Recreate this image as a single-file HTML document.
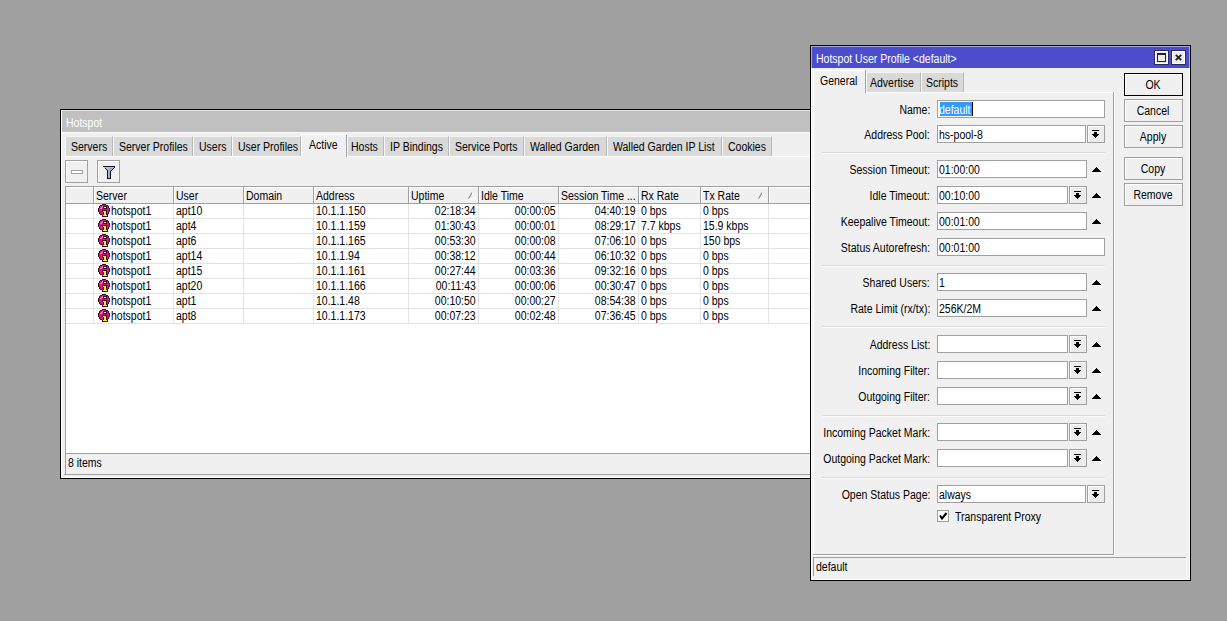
<!DOCTYPE html><html><head><meta charset="utf-8"><style>
html,body{margin:0;padding:0;width:1227px;height:621px;overflow:hidden;background:#a0a0a0}
div{position:absolute}
.t{font-family:"Liberation Sans",sans-serif;font-size:12px;line-height:13px;white-space:nowrap;color:#000}
</style></head><body>
<div style="left:60px;top:109px;width:800px;height:370px;background:#000"></div>
<div style="left:61px;top:110px;width:798px;height:368px;background:#fff"></div>
<div style="left:62px;top:111px;width:796px;height:366px;background:#f0f0f0"></div>
<div style="left:62px;top:111px;width:796px;height:21px;background:#c0c0c0"></div>
<div style="left:61px;top:110px;width:798px;height:1px;background:#e2e2e2"></div>
<div style="left:62px;top:132px;width:797px;height:1px;background:#fafafa"></div>
<div class="t" style="left:66px;top:117px;color:#fff;transform:scaleX(0.875);transform-origin:0 0;">Hotspot</div>
<div style="left:65px;top:156px;width:794px;height:1px;background:#fff"></div>
<div style="left:65px;top:136px;width:48px;height:20px;background:#d9d9d9"></div>
<div style="left:65px;top:136px;width:47px;height:1px;background:#f4f4f4"></div>
<div style="left:65px;top:136px;width:1px;height:20px;background:#f8f8f8"></div>
<div style="left:112px;top:137px;width:1px;height:19px;background:#b8b8b8"></div>
<div class="t" style="left:71px;top:141px;color:#000;transform:scaleX(0.875);transform-origin:0 0;">Servers</div>
<div style="left:113px;top:136px;width:80px;height:20px;background:#d9d9d9"></div>
<div style="left:113px;top:136px;width:79px;height:1px;background:#f4f4f4"></div>
<div style="left:113px;top:136px;width:1px;height:20px;background:#f8f8f8"></div>
<div style="left:192px;top:137px;width:1px;height:19px;background:#b8b8b8"></div>
<div class="t" style="left:119px;top:141px;color:#000;transform:scaleX(0.875);transform-origin:0 0;">Server Profiles</div>
<div style="left:193px;top:136px;width:39px;height:20px;background:#d9d9d9"></div>
<div style="left:193px;top:136px;width:38px;height:1px;background:#f4f4f4"></div>
<div style="left:193px;top:136px;width:1px;height:20px;background:#f8f8f8"></div>
<div style="left:231px;top:137px;width:1px;height:19px;background:#b8b8b8"></div>
<div class="t" style="left:199px;top:141px;color:#000;transform:scaleX(0.875);transform-origin:0 0;">Users</div>
<div style="left:232px;top:136px;width:69px;height:20px;background:#d9d9d9"></div>
<div style="left:232px;top:136px;width:68px;height:1px;background:#f4f4f4"></div>
<div style="left:232px;top:136px;width:1px;height:20px;background:#f8f8f8"></div>
<div style="left:300px;top:137px;width:1px;height:19px;background:#b8b8b8"></div>
<div class="t" style="left:238px;top:141px;color:#000;transform:scaleX(0.875);transform-origin:0 0;">User Profiles</div>
<div style="left:347px;top:136px;width:37px;height:20px;background:#d9d9d9"></div>
<div style="left:347px;top:136px;width:36px;height:1px;background:#f4f4f4"></div>
<div style="left:347px;top:136px;width:1px;height:20px;background:#f8f8f8"></div>
<div style="left:383px;top:137px;width:1px;height:19px;background:#b8b8b8"></div>
<div class="t" style="left:351px;top:141px;color:#000;transform:scaleX(0.875);transform-origin:0 0;">Hosts</div>
<div style="left:384px;top:136px;width:65px;height:20px;background:#d9d9d9"></div>
<div style="left:384px;top:136px;width:64px;height:1px;background:#f4f4f4"></div>
<div style="left:384px;top:136px;width:1px;height:20px;background:#f8f8f8"></div>
<div style="left:448px;top:137px;width:1px;height:19px;background:#b8b8b8"></div>
<div class="t" style="left:390px;top:141px;color:#000;transform:scaleX(0.875);transform-origin:0 0;">IP Bindings</div>
<div style="left:449px;top:136px;width:75px;height:20px;background:#d9d9d9"></div>
<div style="left:449px;top:136px;width:74px;height:1px;background:#f4f4f4"></div>
<div style="left:449px;top:136px;width:1px;height:20px;background:#f8f8f8"></div>
<div style="left:523px;top:137px;width:1px;height:19px;background:#b8b8b8"></div>
<div class="t" style="left:455px;top:141px;color:#000;transform:scaleX(0.875);transform-origin:0 0;">Service Ports</div>
<div style="left:524px;top:136px;width:83px;height:20px;background:#d9d9d9"></div>
<div style="left:524px;top:136px;width:82px;height:1px;background:#f4f4f4"></div>
<div style="left:524px;top:136px;width:1px;height:20px;background:#f8f8f8"></div>
<div style="left:606px;top:137px;width:1px;height:19px;background:#b8b8b8"></div>
<div class="t" style="left:530px;top:141px;color:#000;transform:scaleX(0.875);transform-origin:0 0;">Walled Garden</div>
<div style="left:607px;top:136px;width:115px;height:20px;background:#d9d9d9"></div>
<div style="left:607px;top:136px;width:114px;height:1px;background:#f4f4f4"></div>
<div style="left:607px;top:136px;width:1px;height:20px;background:#f8f8f8"></div>
<div style="left:721px;top:137px;width:1px;height:19px;background:#b8b8b8"></div>
<div class="t" style="left:613px;top:141px;color:#000;transform:scaleX(0.875);transform-origin:0 0;">Walled Garden IP List</div>
<div style="left:722px;top:136px;width:50px;height:20px;background:#d9d9d9"></div>
<div style="left:722px;top:136px;width:49px;height:1px;background:#f4f4f4"></div>
<div style="left:722px;top:136px;width:1px;height:20px;background:#f8f8f8"></div>
<div style="left:771px;top:137px;width:1px;height:19px;background:#b8b8b8"></div>
<div class="t" style="left:728px;top:141px;color:#000;transform:scaleX(0.875);transform-origin:0 0;">Cookies</div>
<div style="left:301px;top:134px;width:46px;height:24px;background:#f0f0f0"></div>
<div style="left:301px;top:134px;width:45px;height:1px;background:#fff"></div>
<div style="left:301px;top:134px;width:1px;height:23px;background:#fff"></div>
<div style="left:346px;top:135px;width:1px;height:22px;background:#a0a0a0"></div>
<div class="t" style="left:309px;top:139px;color:#000;transform:scaleX(0.875);transform-origin:0 0;">Active</div>
<div style="left:65px;top:160px;width:23px;height:23px;background:#f0f0f0;border:1px solid #a0a0a0;box-sizing:border-box;box-shadow:inset 1px 1px 0 #fff"></div>
<div style="left:97px;top:160px;width:23px;height:23px;background:#f0f0f0;border:1px solid #a0a0a0;box-sizing:border-box;box-shadow:inset 1px 1px 0 #fff"></div>
<div style="left:71px;top:170px;width:12px;height:4px;background:#fff;border:1px solid #a0a0a0;box-sizing:border-box"></div>
<svg style="position:absolute;left:103px;top:166px" width="12" height="13" viewBox="0 0 12 13" shape-rendering="crispEdges"><defs><linearGradient id="fg" x1="0" x2="1"><stop offset="0" stop-color="#d4d7f0"/><stop offset="1" stop-color="#7f86c4"/></linearGradient></defs><path d="M0 0H12V1L8 5V13H4V5L0 1Z" fill="#111"/><path d="M1 1H11L7 5V12H5V5Z" fill="url(#fg)"/><rect x="1" y="1" width="10" height="1" fill="#b8bce0"/></svg>
<div style="left:65px;top:186px;width:760px;height:268px;background:#fff"></div>
<div style="left:65px;top:186px;width:794px;height:1px;background:#a0a0a0"></div>
<div style="left:65px;top:186px;width:1px;height:268px;background:#a0a0a0"></div>
<div style="left:66px;top:187px;width:792px;height:16px;background:#f0f0f0"></div>
<div style="left:66px;top:187px;width:793px;height:1px;background:#fff"></div>
<div style="left:66px;top:203px;width:793px;height:1px;background:#a0a0a0"></div>
<div style="left:93px;top:187px;width:1px;height:16px;background:#a0a0a0"></div>
<div style="left:94px;top:188px;width:1px;height:15px;background:#fff"></div>
<div style="left:93px;top:204px;width:1px;height:119px;background:#e3e3e3"></div>
<div style="left:173px;top:187px;width:1px;height:16px;background:#a0a0a0"></div>
<div style="left:174px;top:188px;width:1px;height:15px;background:#fff"></div>
<div style="left:173px;top:204px;width:1px;height:119px;background:#e3e3e3"></div>
<div style="left:243px;top:187px;width:1px;height:16px;background:#a0a0a0"></div>
<div style="left:244px;top:188px;width:1px;height:15px;background:#fff"></div>
<div style="left:243px;top:204px;width:1px;height:119px;background:#e3e3e3"></div>
<div style="left:313px;top:187px;width:1px;height:16px;background:#a0a0a0"></div>
<div style="left:314px;top:188px;width:1px;height:15px;background:#fff"></div>
<div style="left:313px;top:204px;width:1px;height:119px;background:#e3e3e3"></div>
<div style="left:408px;top:187px;width:1px;height:16px;background:#a0a0a0"></div>
<div style="left:409px;top:188px;width:1px;height:15px;background:#fff"></div>
<div style="left:408px;top:204px;width:1px;height:119px;background:#e3e3e3"></div>
<div style="left:478px;top:187px;width:1px;height:16px;background:#a0a0a0"></div>
<div style="left:479px;top:188px;width:1px;height:15px;background:#fff"></div>
<div style="left:478px;top:204px;width:1px;height:119px;background:#e3e3e3"></div>
<div style="left:558px;top:187px;width:1px;height:16px;background:#a0a0a0"></div>
<div style="left:559px;top:188px;width:1px;height:15px;background:#fff"></div>
<div style="left:558px;top:204px;width:1px;height:119px;background:#e3e3e3"></div>
<div style="left:638px;top:187px;width:1px;height:16px;background:#a0a0a0"></div>
<div style="left:639px;top:188px;width:1px;height:15px;background:#fff"></div>
<div style="left:638px;top:204px;width:1px;height:119px;background:#e3e3e3"></div>
<div style="left:700px;top:187px;width:1px;height:16px;background:#a0a0a0"></div>
<div style="left:701px;top:188px;width:1px;height:15px;background:#fff"></div>
<div style="left:700px;top:204px;width:1px;height:119px;background:#e3e3e3"></div>
<div style="left:768px;top:187px;width:1px;height:16px;background:#a0a0a0"></div>
<div style="left:769px;top:188px;width:1px;height:15px;background:#fff"></div>
<div style="left:768px;top:204px;width:1px;height:119px;background:#e3e3e3"></div>
<div style="left:66px;top:218px;width:793px;height:1px;background:#e3e3e3"></div>
<div style="left:66px;top:233px;width:793px;height:1px;background:#e3e3e3"></div>
<div style="left:66px;top:248px;width:793px;height:1px;background:#e3e3e3"></div>
<div style="left:66px;top:263px;width:793px;height:1px;background:#e3e3e3"></div>
<div style="left:66px;top:278px;width:793px;height:1px;background:#e3e3e3"></div>
<div style="left:66px;top:293px;width:793px;height:1px;background:#e3e3e3"></div>
<div style="left:66px;top:308px;width:793px;height:1px;background:#e3e3e3"></div>
<div style="left:66px;top:323px;width:793px;height:1px;background:#e3e3e3"></div>
<svg style="position:absolute;left:468px;top:192px" width="9" height="8" viewBox="0 0 9 8"><path d="M0.5 7 L4 0.5" stroke="#8a8a8a" stroke-width="1.2" fill="none"/><path d="M4 0.5 L7.5 7 H0.5" stroke="#fff" stroke-width="1" fill="none"/></svg>
<svg style="position:absolute;left:758px;top:192px" width="9" height="8" viewBox="0 0 9 8"><path d="M0.5 7 L4 0.5" stroke="#8a8a8a" stroke-width="1.2" fill="none"/><path d="M4 0.5 L7.5 7 H0.5" stroke="#fff" stroke-width="1" fill="none"/></svg>
<div class="t" style="left:96px;top:190px;color:#000;transform:scaleX(0.875);transform-origin:0 0;">Server</div>
<div class="t" style="left:176px;top:190px;color:#000;transform:scaleX(0.875);transform-origin:0 0;">User</div>
<div class="t" style="left:246px;top:190px;color:#000;transform:scaleX(0.875);transform-origin:0 0;">Domain</div>
<div class="t" style="left:316px;top:190px;color:#000;transform:scaleX(0.875);transform-origin:0 0;">Address</div>
<div class="t" style="left:411px;top:190px;color:#000;transform:scaleX(0.875);transform-origin:0 0;">Uptime</div>
<div class="t" style="left:481px;top:190px;color:#000;transform:scaleX(0.875);transform-origin:0 0;">Idle Time</div>
<div class="t" style="left:561px;top:190px;color:#000;transform:scaleX(0.875);transform-origin:0 0;">Session Time ...</div>
<div class="t" style="left:641px;top:190px;color:#000;transform:scaleX(0.875);transform-origin:0 0;">Rx Rate</div>
<div class="t" style="left:703px;top:190px;color:#000;transform:scaleX(0.875);transform-origin:0 0;">Tx Rate</div>
<svg width="0" height="0" style="position:absolute"><defs><symbol id="ic" viewBox="0 0 12 13"><rect x="4" y="0" width="4" height="1" fill="#3a0c22"/><rect x="2" y="1" width="2" height="1" fill="#3a0c22"/><rect x="4" y="1" width="4" height="1" fill="#d0157e"/><rect x="8" y="1" width="2" height="1" fill="#3a0c22"/><rect x="1" y="2" width="1" height="1" fill="#3a0c22"/><rect x="2" y="2" width="2" height="1" fill="#d0157e"/><rect x="4" y="2" width="1" height="1" fill="#ff74cc"/><rect x="5" y="2" width="4" height="1" fill="#3a0c22"/><rect x="9" y="2" width="1" height="1" fill="#d0157e"/><rect x="10" y="2" width="1" height="1" fill="#3a0c22"/><rect x="1" y="3" width="1" height="1" fill="#3a0c22"/><rect x="2" y="3" width="1" height="1" fill="#d0157e"/><rect x="3" y="3" width="2" height="1" fill="#ff74cc"/><rect x="5" y="3" width="1" height="1" fill="#3a0c22"/><rect x="6" y="3" width="2" height="1" fill="#fff2a0"/><rect x="8" y="3" width="1" height="1" fill="#3a0c22"/><rect x="9" y="3" width="1" height="1" fill="#d0157e"/><rect x="10" y="3" width="1" height="1" fill="#3a0c22"/><rect x="0" y="4" width="1" height="1" fill="#3a0c22"/><rect x="1" y="4" width="1" height="1" fill="#d0157e"/><rect x="2" y="4" width="2" height="1" fill="#ff74cc"/><rect x="4" y="4" width="1" height="1" fill="#d0157e"/><rect x="5" y="4" width="4" height="1" fill="#3a0c22"/><rect x="9" y="4" width="2" height="1" fill="#d0157e"/><rect x="11" y="4" width="1" height="1" fill="#3a0c22"/><rect x="0" y="5" width="1" height="1" fill="#3a0c22"/><rect x="1" y="5" width="10" height="1" fill="#d0157e"/><rect x="11" y="5" width="1" height="1" fill="#3a0c22"/><rect x="0" y="6" width="1" height="1" fill="#3a0c22"/><rect x="1" y="6" width="3" height="1" fill="#d0157e"/><rect x="4" y="6" width="5" height="1" fill="#3a0c22"/><rect x="9" y="6" width="2" height="1" fill="#d0157e"/><rect x="11" y="6" width="1" height="1" fill="#3a0c22"/><rect x="0" y="7" width="1" height="1" fill="#3a0c22"/><rect x="1" y="7" width="3" height="1" fill="#d0157e"/><rect x="4" y="7" width="1" height="1" fill="#3a0c22"/><rect x="5" y="7" width="3" height="1" fill="#ffec1a"/><rect x="8" y="7" width="1" height="1" fill="#3a0c22"/><rect x="9" y="7" width="2" height="1" fill="#d0157e"/><rect x="11" y="7" width="1" height="1" fill="#3a0c22"/><rect x="1" y="8" width="1" height="1" fill="#3a0c22"/><rect x="2" y="8" width="3" height="1" fill="#d0157e"/><rect x="5" y="8" width="1" height="1" fill="#3a0c22"/><rect x="6" y="8" width="2" height="1" fill="#ffec1a"/><rect x="8" y="8" width="1" height="1" fill="#3a0c22"/><rect x="9" y="8" width="1" height="1" fill="#d0157e"/><rect x="10" y="8" width="1" height="1" fill="#3a0c22"/><rect x="1" y="9" width="1" height="1" fill="#3a0c22"/><rect x="2" y="9" width="3" height="1" fill="#d0157e"/><rect x="5" y="9" width="1" height="1" fill="#3a0c22"/><rect x="6" y="9" width="2" height="1" fill="#ffec1a"/><rect x="8" y="9" width="1" height="1" fill="#3a0c22"/><rect x="9" y="9" width="1" height="1" fill="#d0157e"/><rect x="10" y="9" width="1" height="1" fill="#3a0c22"/><rect x="2" y="10" width="2" height="1" fill="#3a0c22"/><rect x="4" y="10" width="1" height="1" fill="#d0157e"/><rect x="5" y="10" width="1" height="1" fill="#3a0c22"/><rect x="6" y="10" width="2" height="1" fill="#ffec1a"/><rect x="8" y="10" width="2" height="1" fill="#3a0c22"/><rect x="4" y="11" width="1" height="1" fill="#3a0c22"/><rect x="5" y="11" width="4" height="1" fill="#ffec1a"/><rect x="9" y="11" width="1" height="1" fill="#3a0c22"/><rect x="4" y="12" width="6" height="1" fill="#3a0c22"/></symbol></defs></svg>
<svg style="position:absolute;left:98px;top:204px" width="12" height="13" shape-rendering="crispEdges"><use href="#ic"/></svg>
<div class="t" style="left:111px;top:205px;color:#000;transform:scaleX(0.875);transform-origin:0 0;">hotspot1</div>
<div class="t" style="left:176px;top:205px;color:#000;transform:scaleX(0.875);transform-origin:0 0;">apt10</div>
<div class="t" style="left:316px;top:205px;color:#000;transform:scaleX(0.875);transform-origin:0 0;">10.1.1.150</div>
<div class="t" style="right:751px;top:205px;color:#000;transform:scaleX(0.875);transform-origin:100% 0;">02:18:34</div>
<div class="t" style="right:671px;top:205px;color:#000;transform:scaleX(0.875);transform-origin:100% 0;">00:00:05</div>
<div class="t" style="right:591px;top:205px;color:#000;transform:scaleX(0.875);transform-origin:100% 0;">04:40:19</div>
<div class="t" style="left:641px;top:205px;color:#000;transform:scaleX(0.875);transform-origin:0 0;">0 bps</div>
<div class="t" style="left:703px;top:205px;color:#000;transform:scaleX(0.875);transform-origin:0 0;">0 bps</div>
<svg style="position:absolute;left:98px;top:219px" width="12" height="13" shape-rendering="crispEdges"><use href="#ic"/></svg>
<div class="t" style="left:111px;top:220px;color:#000;transform:scaleX(0.875);transform-origin:0 0;">hotspot1</div>
<div class="t" style="left:176px;top:220px;color:#000;transform:scaleX(0.875);transform-origin:0 0;">apt4</div>
<div class="t" style="left:316px;top:220px;color:#000;transform:scaleX(0.875);transform-origin:0 0;">10.1.1.159</div>
<div class="t" style="right:751px;top:220px;color:#000;transform:scaleX(0.875);transform-origin:100% 0;">01:30:43</div>
<div class="t" style="right:671px;top:220px;color:#000;transform:scaleX(0.875);transform-origin:100% 0;">00:00:01</div>
<div class="t" style="right:591px;top:220px;color:#000;transform:scaleX(0.875);transform-origin:100% 0;">08:29:17</div>
<div class="t" style="left:641px;top:220px;color:#000;transform:scaleX(0.875);transform-origin:0 0;">7.7 kbps</div>
<div class="t" style="left:703px;top:220px;color:#000;transform:scaleX(0.875);transform-origin:0 0;">15.9 kbps</div>
<svg style="position:absolute;left:98px;top:234px" width="12" height="13" shape-rendering="crispEdges"><use href="#ic"/></svg>
<div class="t" style="left:111px;top:235px;color:#000;transform:scaleX(0.875);transform-origin:0 0;">hotspot1</div>
<div class="t" style="left:176px;top:235px;color:#000;transform:scaleX(0.875);transform-origin:0 0;">apt6</div>
<div class="t" style="left:316px;top:235px;color:#000;transform:scaleX(0.875);transform-origin:0 0;">10.1.1.165</div>
<div class="t" style="right:751px;top:235px;color:#000;transform:scaleX(0.875);transform-origin:100% 0;">00:53:30</div>
<div class="t" style="right:671px;top:235px;color:#000;transform:scaleX(0.875);transform-origin:100% 0;">00:00:08</div>
<div class="t" style="right:591px;top:235px;color:#000;transform:scaleX(0.875);transform-origin:100% 0;">07:06:10</div>
<div class="t" style="left:641px;top:235px;color:#000;transform:scaleX(0.875);transform-origin:0 0;">0 bps</div>
<div class="t" style="left:703px;top:235px;color:#000;transform:scaleX(0.875);transform-origin:0 0;">150 bps</div>
<svg style="position:absolute;left:98px;top:249px" width="12" height="13" shape-rendering="crispEdges"><use href="#ic"/></svg>
<div class="t" style="left:111px;top:250px;color:#000;transform:scaleX(0.875);transform-origin:0 0;">hotspot1</div>
<div class="t" style="left:176px;top:250px;color:#000;transform:scaleX(0.875);transform-origin:0 0;">apt14</div>
<div class="t" style="left:316px;top:250px;color:#000;transform:scaleX(0.875);transform-origin:0 0;">10.1.1.94</div>
<div class="t" style="right:751px;top:250px;color:#000;transform:scaleX(0.875);transform-origin:100% 0;">00:38:12</div>
<div class="t" style="right:671px;top:250px;color:#000;transform:scaleX(0.875);transform-origin:100% 0;">00:00:44</div>
<div class="t" style="right:591px;top:250px;color:#000;transform:scaleX(0.875);transform-origin:100% 0;">06:10:32</div>
<div class="t" style="left:641px;top:250px;color:#000;transform:scaleX(0.875);transform-origin:0 0;">0 bps</div>
<div class="t" style="left:703px;top:250px;color:#000;transform:scaleX(0.875);transform-origin:0 0;">0 bps</div>
<svg style="position:absolute;left:98px;top:264px" width="12" height="13" shape-rendering="crispEdges"><use href="#ic"/></svg>
<div class="t" style="left:111px;top:265px;color:#000;transform:scaleX(0.875);transform-origin:0 0;">hotspot1</div>
<div class="t" style="left:176px;top:265px;color:#000;transform:scaleX(0.875);transform-origin:0 0;">apt15</div>
<div class="t" style="left:316px;top:265px;color:#000;transform:scaleX(0.875);transform-origin:0 0;">10.1.1.161</div>
<div class="t" style="right:751px;top:265px;color:#000;transform:scaleX(0.875);transform-origin:100% 0;">00:27:44</div>
<div class="t" style="right:671px;top:265px;color:#000;transform:scaleX(0.875);transform-origin:100% 0;">00:03:36</div>
<div class="t" style="right:591px;top:265px;color:#000;transform:scaleX(0.875);transform-origin:100% 0;">09:32:16</div>
<div class="t" style="left:641px;top:265px;color:#000;transform:scaleX(0.875);transform-origin:0 0;">0 bps</div>
<div class="t" style="left:703px;top:265px;color:#000;transform:scaleX(0.875);transform-origin:0 0;">0 bps</div>
<svg style="position:absolute;left:98px;top:279px" width="12" height="13" shape-rendering="crispEdges"><use href="#ic"/></svg>
<div class="t" style="left:111px;top:280px;color:#000;transform:scaleX(0.875);transform-origin:0 0;">hotspot1</div>
<div class="t" style="left:176px;top:280px;color:#000;transform:scaleX(0.875);transform-origin:0 0;">apt20</div>
<div class="t" style="left:316px;top:280px;color:#000;transform:scaleX(0.875);transform-origin:0 0;">10.1.1.166</div>
<div class="t" style="right:751px;top:280px;color:#000;transform:scaleX(0.875);transform-origin:100% 0;">00:11:43</div>
<div class="t" style="right:671px;top:280px;color:#000;transform:scaleX(0.875);transform-origin:100% 0;">00:00:06</div>
<div class="t" style="right:591px;top:280px;color:#000;transform:scaleX(0.875);transform-origin:100% 0;">00:30:47</div>
<div class="t" style="left:641px;top:280px;color:#000;transform:scaleX(0.875);transform-origin:0 0;">0 bps</div>
<div class="t" style="left:703px;top:280px;color:#000;transform:scaleX(0.875);transform-origin:0 0;">0 bps</div>
<svg style="position:absolute;left:98px;top:294px" width="12" height="13" shape-rendering="crispEdges"><use href="#ic"/></svg>
<div class="t" style="left:111px;top:295px;color:#000;transform:scaleX(0.875);transform-origin:0 0;">hotspot1</div>
<div class="t" style="left:176px;top:295px;color:#000;transform:scaleX(0.875);transform-origin:0 0;">apt1</div>
<div class="t" style="left:316px;top:295px;color:#000;transform:scaleX(0.875);transform-origin:0 0;">10.1.1.48</div>
<div class="t" style="right:751px;top:295px;color:#000;transform:scaleX(0.875);transform-origin:100% 0;">00:10:50</div>
<div class="t" style="right:671px;top:295px;color:#000;transform:scaleX(0.875);transform-origin:100% 0;">00:00:27</div>
<div class="t" style="right:591px;top:295px;color:#000;transform:scaleX(0.875);transform-origin:100% 0;">08:54:38</div>
<div class="t" style="left:641px;top:295px;color:#000;transform:scaleX(0.875);transform-origin:0 0;">0 bps</div>
<div class="t" style="left:703px;top:295px;color:#000;transform:scaleX(0.875);transform-origin:0 0;">0 bps</div>
<svg style="position:absolute;left:98px;top:309px" width="12" height="13" shape-rendering="crispEdges"><use href="#ic"/></svg>
<div class="t" style="left:111px;top:310px;color:#000;transform:scaleX(0.875);transform-origin:0 0;">hotspot1</div>
<div class="t" style="left:176px;top:310px;color:#000;transform:scaleX(0.875);transform-origin:0 0;">apt8</div>
<div class="t" style="left:316px;top:310px;color:#000;transform:scaleX(0.875);transform-origin:0 0;">10.1.1.173</div>
<div class="t" style="right:751px;top:310px;color:#000;transform:scaleX(0.875);transform-origin:100% 0;">00:07:23</div>
<div class="t" style="right:671px;top:310px;color:#000;transform:scaleX(0.875);transform-origin:100% 0;">00:02:48</div>
<div class="t" style="right:591px;top:310px;color:#000;transform:scaleX(0.875);transform-origin:100% 0;">07:36:45</div>
<div class="t" style="left:641px;top:310px;color:#000;transform:scaleX(0.875);transform-origin:0 0;">0 bps</div>
<div class="t" style="left:703px;top:310px;color:#000;transform:scaleX(0.875);transform-origin:0 0;">0 bps</div>
<div style="left:65px;top:453px;width:794px;height:1px;background:#a0a0a0"></div>
<div style="left:65px;top:453px;width:1px;height:21px;background:#a0a0a0"></div>
<div style="left:64px;top:474px;width:795px;height:1px;background:#a0a0a0"></div>
<div class="t" style="left:68px;top:457px;color:#000;transform:scaleX(0.875);transform-origin:0 0;">8 items</div>
<div style="left:810px;top:45px;width:381px;height:536px;background:#000"></div>
<div style="left:811px;top:46px;width:379px;height:534px;background:#fff"></div>
<div style="left:812px;top:47px;width:377px;height:532px;background:#f0f0f0"></div>
<div style="left:812px;top:47px;width:377px;height:21px;background:#4c4dcc"></div>
<div style="left:811px;top:46px;width:379px;height:1px;background:#a9a9e6"></div>
<div style="left:811px;top:47px;width:1px;height:21px;background:#a9a9e6"></div>
<div style="left:1189px;top:47px;width:1px;height:21px;background:#a9a9e6"></div>
<div class="t" style="left:816px;top:53px;color:#fff;transform:scaleX(0.875);transform-origin:0 0;">Hotspot User Profile &lt;default&gt;</div>
<div style="left:1154px;top:50px;width:15px;height:15px;background:#2a2a66"></div>
<div style="left:1155px;top:51px;width:13px;height:13px;background:#fff"></div>
<div style="left:1156px;top:52px;width:11px;height:11px;background:#ebebeb"></div>
<div style="left:1171px;top:50px;width:15px;height:15px;background:#2a2a66"></div>
<div style="left:1172px;top:51px;width:13px;height:13px;background:#fff"></div>
<div style="left:1173px;top:52px;width:11px;height:11px;background:#ebebeb"></div>
<div style="left:1157px;top:53px;width:9px;height:9px;border:1px solid #222;border-top:2px solid #222;box-sizing:border-box"></div>
<svg style="position:absolute;left:1175px;top:54px" width="7" height="7" viewBox="0 0 7 7"><path d="M0.8 0.8 L6.2 6.2 M6.2 0.8 L0.8 6.2" stroke="#222" stroke-width="1.9"/></svg>
<div style="left:866px;top:92px;width:247px;height:1px;background:#fff"></div>
<div style="left:813px;top:70px;width:1px;height:485px;background:#fff"></div>
<div style="left:1113px;top:92px;width:1px;height:463px;background:#a0a0a0"></div>
<div style="left:813px;top:554px;width:301px;height:1px;background:#a0a0a0"></div>
<div style="left:1114px;top:92px;width:1px;height:464px;background:#fff"></div>
<div style="left:813px;top:555px;width:302px;height:1px;background:#fff"></div>
<div style="left:866px;top:72px;width:55px;height:20px;background:#d9d9d9"></div>
<div style="left:866px;top:72px;width:54px;height:1px;background:#f4f4f4"></div>
<div style="left:866px;top:72px;width:1px;height:20px;background:#f8f8f8"></div>
<div style="left:920px;top:73px;width:1px;height:19px;background:#b8b8b8"></div>
<div style="left:921px;top:72px;width:43px;height:20px;background:#d9d9d9"></div>
<div style="left:921px;top:72px;width:42px;height:1px;background:#f4f4f4"></div>
<div style="left:921px;top:72px;width:1px;height:20px;background:#f8f8f8"></div>
<div style="left:963px;top:73px;width:1px;height:19px;background:#b8b8b8"></div>
<div style="left:813px;top:70px;width:52px;height:1px;background:#fff"></div>
<div style="left:865px;top:70px;width:1px;height:23px;background:#a0a0a0"></div>
<div class="t" style="left:820px;top:75px;color:#000;transform:scaleX(0.875);transform-origin:0 0;">General</div>
<div class="t" style="left:870px;top:77px;color:#000;transform:scaleX(0.875);transform-origin:0 0;">Advertise</div>
<div class="t" style="left:926px;top:77px;color:#000;transform:scaleX(0.875);transform-origin:0 0;">Scripts</div>
<div style="left:1124px;top:73px;width:59px;height:23px;background:#f0f0f0;border:1px solid #000;box-sizing:border-box;box-shadow:inset 1px 1px 0 #fff"></div>
<div class="t" style="left:1053px;width:200px;text-align:center;top:79px;color:#000;transform:scaleX(0.875);transform-origin:50% 0;">OK</div>
<div style="left:1124px;top:99px;width:59px;height:23px;background:#f0f0f0;border:1px solid #a0a0a0;box-sizing:border-box;box-shadow:inset 1px 1px 0 #fff"></div>
<div class="t" style="left:1053px;width:200px;text-align:center;top:105px;color:#000;transform:scaleX(0.875);transform-origin:50% 0;">Cancel</div>
<div style="left:1124px;top:125px;width:59px;height:23px;background:#f0f0f0;border:1px solid #a0a0a0;box-sizing:border-box;box-shadow:inset 1px 1px 0 #fff"></div>
<div class="t" style="left:1053px;width:200px;text-align:center;top:131px;color:#000;transform:scaleX(0.875);transform-origin:50% 0;">Apply</div>
<div style="left:1124px;top:157px;width:59px;height:23px;background:#f0f0f0;border:1px solid #a0a0a0;box-sizing:border-box;box-shadow:inset 1px 1px 0 #fff"></div>
<div class="t" style="left:1053px;width:200px;text-align:center;top:163px;color:#000;transform:scaleX(0.875);transform-origin:50% 0;">Copy</div>
<div style="left:1124px;top:183px;width:59px;height:23px;background:#f0f0f0;border:1px solid #a0a0a0;box-sizing:border-box;box-shadow:inset 1px 1px 0 #fff"></div>
<div class="t" style="left:1053px;width:200px;text-align:center;top:189px;color:#000;transform:scaleX(0.875);transform-origin:50% 0;">Remove</div>
<div class="t" style="right:297px;top:104px;color:#000;transform:scaleX(0.875);transform-origin:100% 0;">Name:</div>
<div style="left:937px;top:100px;width:168px;height:18px;background:#fff;border:1px solid #a0a0a0;box-sizing:border-box"></div>
<div style="left:940px;top:102px;width:33px;height:14px;background:#3399ff"></div>
<div style="left:972px;top:102px;width:1px;height:14px;background:#000"></div>
<div class="t" style="left:939px;top:104px;color:#fff;transform:scaleX(0.875);transform-origin:0 0;">default</div>
<div class="t" style="right:297px;top:129px;color:#000;transform:scaleX(0.875);transform-origin:100% 0;">Address Pool:</div>
<div style="left:937px;top:125px;width:149px;height:18px;background:#fff;border:1px solid #a0a0a0;box-sizing:border-box"></div>
<div class="t" style="left:939px;top:129px;color:#000;transform:scaleX(0.875);transform-origin:0 0;">hs-pool-8</div>
<div style="left:1087px;top:125px;width:18px;height:18px;background:#ececec;border:1px solid #a0a0a0;box-sizing:border-box;box-shadow:inset 1px 1px 0 #fff"></div>
<svg style="position:absolute;left:1087px;top:125px" width="18" height="18" viewBox="0 0 18 18" shape-rendering="crispEdges"><rect x="5" y="5" width="7" height="1"/><rect x="7" y="7" width="3" height="2"/><rect x="5" y="9" width="7" height="1"/><rect x="6" y="10" width="5" height="1"/><rect x="7" y="11" width="3" height="1"/><rect x="8" y="12" width="1" height="1"/></svg>
<div style="left:822px;top:152px;width:283px;height:1px;background:#dadada"></div>
<div style="left:822px;top:153px;width:283px;height:1px;background:#fbfbfb"></div>
<div class="t" style="right:297px;top:164px;color:#000;transform:scaleX(0.875);transform-origin:100% 0;">Session Timeout:</div>
<div style="left:937px;top:160px;width:150px;height:18px;background:#fff;border:1px solid #a0a0a0;box-sizing:border-box"></div>
<div class="t" style="left:939px;top:164px;color:#000;transform:scaleX(0.875);transform-origin:0 0;">01:00:00</div>
<svg style="position:absolute;left:1092px;top:167px" width="9" height="5" viewBox="0 0 9 5" shape-rendering="crispEdges"><rect x="4" y="0" width="1" height="1"/><rect x="3" y="1" width="3" height="1"/><rect x="2" y="2" width="5" height="1"/><rect x="1" y="3" width="7" height="1"/><rect x="0" y="4" width="9" height="1"/></svg>
<div class="t" style="right:297px;top:190px;color:#000;transform:scaleX(0.875);transform-origin:100% 0;">Idle Timeout:</div>
<div style="left:937px;top:186px;width:131px;height:18px;background:#fff;border:1px solid #a0a0a0;box-sizing:border-box"></div>
<div class="t" style="left:939px;top:190px;color:#000;transform:scaleX(0.875);transform-origin:0 0;">00:10:00</div>
<div style="left:1069px;top:186px;width:18px;height:18px;background:#ececec;border:1px solid #a0a0a0;box-sizing:border-box;box-shadow:inset 1px 1px 0 #fff"></div>
<svg style="position:absolute;left:1069px;top:186px" width="18" height="18" viewBox="0 0 18 18" shape-rendering="crispEdges"><rect x="5" y="5" width="7" height="1"/><rect x="7" y="7" width="3" height="2"/><rect x="5" y="9" width="7" height="1"/><rect x="6" y="10" width="5" height="1"/><rect x="7" y="11" width="3" height="1"/><rect x="8" y="12" width="1" height="1"/></svg>
<svg style="position:absolute;left:1092px;top:193px" width="9" height="5" viewBox="0 0 9 5" shape-rendering="crispEdges"><rect x="4" y="0" width="1" height="1"/><rect x="3" y="1" width="3" height="1"/><rect x="2" y="2" width="5" height="1"/><rect x="1" y="3" width="7" height="1"/><rect x="0" y="4" width="9" height="1"/></svg>
<div class="t" style="right:297px;top:216px;color:#000;transform:scaleX(0.875);transform-origin:100% 0;">Keepalive Timeout:</div>
<div style="left:937px;top:212px;width:150px;height:18px;background:#fff;border:1px solid #a0a0a0;box-sizing:border-box"></div>
<div class="t" style="left:939px;top:216px;color:#000;transform:scaleX(0.875);transform-origin:0 0;">00:01:00</div>
<svg style="position:absolute;left:1092px;top:219px" width="9" height="5" viewBox="0 0 9 5" shape-rendering="crispEdges"><rect x="4" y="0" width="1" height="1"/><rect x="3" y="1" width="3" height="1"/><rect x="2" y="2" width="5" height="1"/><rect x="1" y="3" width="7" height="1"/><rect x="0" y="4" width="9" height="1"/></svg>
<div class="t" style="right:297px;top:242px;color:#000;transform:scaleX(0.875);transform-origin:100% 0;">Status Autorefresh:</div>
<div style="left:937px;top:238px;width:168px;height:18px;background:#fff;border:1px solid #a0a0a0;box-sizing:border-box"></div>
<div class="t" style="left:939px;top:242px;color:#000;transform:scaleX(0.875);transform-origin:0 0;">00:01:00</div>
<div style="left:822px;top:265px;width:283px;height:1px;background:#dadada"></div>
<div style="left:822px;top:266px;width:283px;height:1px;background:#fbfbfb"></div>
<div class="t" style="right:297px;top:277px;color:#000;transform:scaleX(0.875);transform-origin:100% 0;">Shared Users:</div>
<div style="left:937px;top:273px;width:150px;height:18px;background:#fff;border:1px solid #a0a0a0;box-sizing:border-box"></div>
<div class="t" style="left:939px;top:277px;color:#000;transform:scaleX(0.875);transform-origin:0 0;">1</div>
<svg style="position:absolute;left:1092px;top:280px" width="9" height="5" viewBox="0 0 9 5" shape-rendering="crispEdges"><rect x="4" y="0" width="1" height="1"/><rect x="3" y="1" width="3" height="1"/><rect x="2" y="2" width="5" height="1"/><rect x="1" y="3" width="7" height="1"/><rect x="0" y="4" width="9" height="1"/></svg>
<div class="t" style="right:297px;top:303px;color:#000;transform:scaleX(0.875);transform-origin:100% 0;">Rate Limit (rx/tx):</div>
<div style="left:937px;top:299px;width:150px;height:18px;background:#fff;border:1px solid #a0a0a0;box-sizing:border-box"></div>
<div class="t" style="left:939px;top:303px;color:#000;transform:scaleX(0.875);transform-origin:0 0;">256K/2M</div>
<svg style="position:absolute;left:1092px;top:306px" width="9" height="5" viewBox="0 0 9 5" shape-rendering="crispEdges"><rect x="4" y="0" width="1" height="1"/><rect x="3" y="1" width="3" height="1"/><rect x="2" y="2" width="5" height="1"/><rect x="1" y="3" width="7" height="1"/><rect x="0" y="4" width="9" height="1"/></svg>
<div style="left:822px;top:326px;width:283px;height:1px;background:#dadada"></div>
<div style="left:822px;top:327px;width:283px;height:1px;background:#fbfbfb"></div>
<div class="t" style="right:297px;top:339px;color:#000;transform:scaleX(0.875);transform-origin:100% 0;">Address List:</div>
<div style="left:937px;top:335px;width:131px;height:18px;background:#fff;border:1px solid #a0a0a0;box-sizing:border-box"></div>
<div style="left:1069px;top:335px;width:18px;height:18px;background:#ececec;border:1px solid #a0a0a0;box-sizing:border-box;box-shadow:inset 1px 1px 0 #fff"></div>
<svg style="position:absolute;left:1069px;top:335px" width="18" height="18" viewBox="0 0 18 18" shape-rendering="crispEdges"><rect x="5" y="5" width="7" height="1"/><rect x="7" y="7" width="3" height="2"/><rect x="5" y="9" width="7" height="1"/><rect x="6" y="10" width="5" height="1"/><rect x="7" y="11" width="3" height="1"/><rect x="8" y="12" width="1" height="1"/></svg>
<svg style="position:absolute;left:1092px;top:342px" width="9" height="5" viewBox="0 0 9 5" shape-rendering="crispEdges"><rect x="4" y="0" width="1" height="1"/><rect x="3" y="1" width="3" height="1"/><rect x="2" y="2" width="5" height="1"/><rect x="1" y="3" width="7" height="1"/><rect x="0" y="4" width="9" height="1"/></svg>
<div class="t" style="right:297px;top:365px;color:#000;transform:scaleX(0.875);transform-origin:100% 0;">Incoming Filter:</div>
<div style="left:937px;top:361px;width:131px;height:18px;background:#fff;border:1px solid #a0a0a0;box-sizing:border-box"></div>
<div style="left:1069px;top:361px;width:18px;height:18px;background:#ececec;border:1px solid #a0a0a0;box-sizing:border-box;box-shadow:inset 1px 1px 0 #fff"></div>
<svg style="position:absolute;left:1069px;top:361px" width="18" height="18" viewBox="0 0 18 18" shape-rendering="crispEdges"><rect x="5" y="5" width="7" height="1"/><rect x="7" y="7" width="3" height="2"/><rect x="5" y="9" width="7" height="1"/><rect x="6" y="10" width="5" height="1"/><rect x="7" y="11" width="3" height="1"/><rect x="8" y="12" width="1" height="1"/></svg>
<svg style="position:absolute;left:1092px;top:368px" width="9" height="5" viewBox="0 0 9 5" shape-rendering="crispEdges"><rect x="4" y="0" width="1" height="1"/><rect x="3" y="1" width="3" height="1"/><rect x="2" y="2" width="5" height="1"/><rect x="1" y="3" width="7" height="1"/><rect x="0" y="4" width="9" height="1"/></svg>
<div class="t" style="right:297px;top:391px;color:#000;transform:scaleX(0.875);transform-origin:100% 0;">Outgoing Filter:</div>
<div style="left:937px;top:387px;width:131px;height:18px;background:#fff;border:1px solid #a0a0a0;box-sizing:border-box"></div>
<div style="left:1069px;top:387px;width:18px;height:18px;background:#ececec;border:1px solid #a0a0a0;box-sizing:border-box;box-shadow:inset 1px 1px 0 #fff"></div>
<svg style="position:absolute;left:1069px;top:387px" width="18" height="18" viewBox="0 0 18 18" shape-rendering="crispEdges"><rect x="5" y="5" width="7" height="1"/><rect x="7" y="7" width="3" height="2"/><rect x="5" y="9" width="7" height="1"/><rect x="6" y="10" width="5" height="1"/><rect x="7" y="11" width="3" height="1"/><rect x="8" y="12" width="1" height="1"/></svg>
<svg style="position:absolute;left:1092px;top:394px" width="9" height="5" viewBox="0 0 9 5" shape-rendering="crispEdges"><rect x="4" y="0" width="1" height="1"/><rect x="3" y="1" width="3" height="1"/><rect x="2" y="2" width="5" height="1"/><rect x="1" y="3" width="7" height="1"/><rect x="0" y="4" width="9" height="1"/></svg>
<div style="left:822px;top:415px;width:283px;height:1px;background:#dadada"></div>
<div style="left:822px;top:416px;width:283px;height:1px;background:#fbfbfb"></div>
<div class="t" style="right:297px;top:427px;color:#000;transform:scaleX(0.875);transform-origin:100% 0;">Incoming Packet Mark:</div>
<div style="left:937px;top:423px;width:131px;height:18px;background:#fff;border:1px solid #a0a0a0;box-sizing:border-box"></div>
<div style="left:1069px;top:423px;width:18px;height:18px;background:#ececec;border:1px solid #a0a0a0;box-sizing:border-box;box-shadow:inset 1px 1px 0 #fff"></div>
<svg style="position:absolute;left:1069px;top:423px" width="18" height="18" viewBox="0 0 18 18" shape-rendering="crispEdges"><rect x="5" y="5" width="7" height="1"/><rect x="7" y="7" width="3" height="2"/><rect x="5" y="9" width="7" height="1"/><rect x="6" y="10" width="5" height="1"/><rect x="7" y="11" width="3" height="1"/><rect x="8" y="12" width="1" height="1"/></svg>
<svg style="position:absolute;left:1092px;top:430px" width="9" height="5" viewBox="0 0 9 5" shape-rendering="crispEdges"><rect x="4" y="0" width="1" height="1"/><rect x="3" y="1" width="3" height="1"/><rect x="2" y="2" width="5" height="1"/><rect x="1" y="3" width="7" height="1"/><rect x="0" y="4" width="9" height="1"/></svg>
<div class="t" style="right:297px;top:453px;color:#000;transform:scaleX(0.875);transform-origin:100% 0;">Outgoing Packet Mark:</div>
<div style="left:937px;top:449px;width:131px;height:18px;background:#fff;border:1px solid #a0a0a0;box-sizing:border-box"></div>
<div style="left:1069px;top:449px;width:18px;height:18px;background:#ececec;border:1px solid #a0a0a0;box-sizing:border-box;box-shadow:inset 1px 1px 0 #fff"></div>
<svg style="position:absolute;left:1069px;top:449px" width="18" height="18" viewBox="0 0 18 18" shape-rendering="crispEdges"><rect x="5" y="5" width="7" height="1"/><rect x="7" y="7" width="3" height="2"/><rect x="5" y="9" width="7" height="1"/><rect x="6" y="10" width="5" height="1"/><rect x="7" y="11" width="3" height="1"/><rect x="8" y="12" width="1" height="1"/></svg>
<svg style="position:absolute;left:1092px;top:456px" width="9" height="5" viewBox="0 0 9 5" shape-rendering="crispEdges"><rect x="4" y="0" width="1" height="1"/><rect x="3" y="1" width="3" height="1"/><rect x="2" y="2" width="5" height="1"/><rect x="1" y="3" width="7" height="1"/><rect x="0" y="4" width="9" height="1"/></svg>
<div style="left:822px;top:477px;width:283px;height:1px;background:#dadada"></div>
<div style="left:822px;top:478px;width:283px;height:1px;background:#fbfbfb"></div>
<div class="t" style="right:297px;top:489px;color:#000;transform:scaleX(0.875);transform-origin:100% 0;">Open Status Page:</div>
<div style="left:937px;top:485px;width:149px;height:18px;background:#fff;border:1px solid #a0a0a0;box-sizing:border-box"></div>
<div class="t" style="left:939px;top:489px;color:#000;transform:scaleX(0.875);transform-origin:0 0;">always</div>
<div style="left:1087px;top:485px;width:18px;height:18px;background:#ececec;border:1px solid #a0a0a0;box-sizing:border-box;box-shadow:inset 1px 1px 0 #fff"></div>
<svg style="position:absolute;left:1087px;top:485px" width="18" height="18" viewBox="0 0 18 18" shape-rendering="crispEdges"><rect x="5" y="5" width="7" height="1"/><rect x="7" y="7" width="3" height="2"/><rect x="5" y="9" width="7" height="1"/><rect x="6" y="10" width="5" height="1"/><rect x="7" y="11" width="3" height="1"/><rect x="8" y="12" width="1" height="1"/></svg>
<div style="left:937px;top:510px;width:12px;height:12px;background:#fff;border:1px solid #a0a0a0;box-sizing:border-box"></div>
<svg style="position:absolute;left:937px;top:510px" width="12" height="12" viewBox="0 0 12 12"><path d="M3 5.5 L5 8.5 L9.5 3" fill="none" stroke="#000" stroke-width="2"/></svg>
<div class="t" style="left:955px;top:511px;color:#000;transform:scaleX(0.875);transform-origin:0 0;">Transparent Proxy</div>
<div style="left:813px;top:557px;width:373px;height:1px;background:#a0a0a0"></div>
<div style="left:813px;top:557px;width:1px;height:19px;background:#a0a0a0"></div>
<div style="left:1186px;top:557px;width:1px;height:20px;background:#fafafa"></div>
<div class="t" style="left:816px;top:561px;color:#000;transform:scaleX(0.875);transform-origin:0 0;">default</div>
</body></html>
